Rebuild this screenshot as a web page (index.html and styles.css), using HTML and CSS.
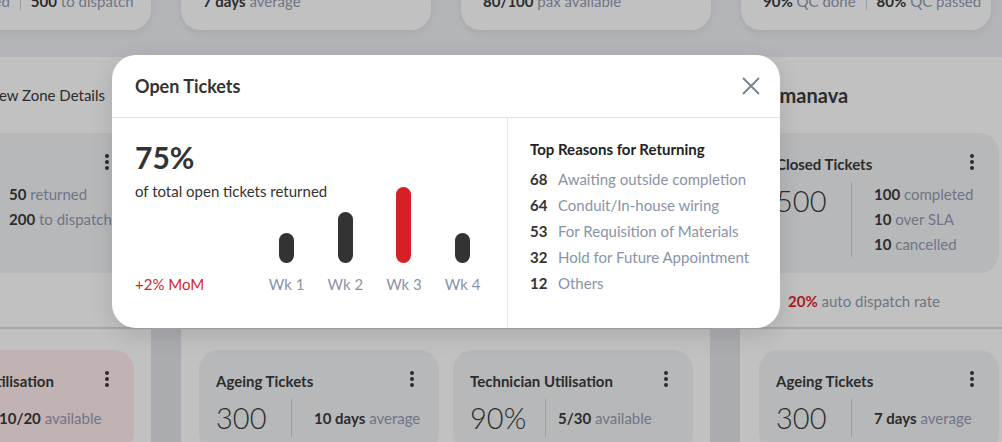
FILE: index.html
```html
<!DOCTYPE html>
<html lang="en">
<head>
<meta charset="utf-8">
<title>Open Tickets</title>
<link rel="stylesheet" href="styles.css">
</head>
<body>
<div class="top-row">
  <div class="top-card"><div class="top-stat"><span><b>120</b> returned</span><i class="vsep"></i><span><b>500</b> to dispatch</span></div></div>
  <div class="top-card"><div class="top-stat"><span><b>7 days</b> average</span></div></div>
  <div class="top-card"><div class="top-stat"><span><b>80/100</b> pax available</span></div></div>
  <div class="top-card"><div class="top-stat"><span><b>90%</b> QC done</span><i class="vsep"></i><span><b>80%</b> QC passed</span></div></div>
</div>

<div class="columns">
  <section class="col col--single">
    <div class="col-head">
      <span class="zone-name">Kalyan</span>
      <span class="zone-link">View Zone Details
        <svg width="16" height="16" viewBox="0 0 16 16"><path d="M6 3l5 5-5 5" fill="none" stroke="#2c2c2c" stroke-width="1.8" stroke-linecap="round" stroke-linejoin="round"/></svg>
      </span>
    </div>
    <div class="col-body">
      <div class="card card--tall">
        <div class="card-head"><span class="card-title">Open Tickets</span><span class="kebab"><i></i><i></i><i></i></span></div>
        <div class="stat"><span class="stat-num">250</span><div class="stat-list"><span><b>50</b> returned</span><span><b>200</b> to dispatch</span></div></div>
      </div>
      <div class="auto-row"></div>
    </div>
    <div class="col-rule"></div>
    <div class="col-lower">
      <div class="card card--alert">
        <div class="card-head"><span class="card-title">Technician Utilisation</span><span class="kebab"><i></i><i></i><i></i></span></div>
        <div class="stat"><span class="stat-num">50%</span><div class="stat-list stat-list--tight"><span><b>10/20</b> available</span></div></div>
      </div>
    </div>
  </section>

  <section class="col col--double">
    <div class="col-head"></div>
    <div class="col-body">
      <div class="card-grid">
        <div class="card card--tall"></div>
        <div class="card card--tall"></div>
      </div>
      <div class="auto-row"></div>
    </div>
    <div class="col-rule"></div>
    <div class="col-lower">
      <div class="card-grid">
        <div class="card">
          <div class="card-head"><span class="card-title">Ageing Tickets</span><span class="kebab"><i></i><i></i><i></i></span></div>
          <div class="stat"><span class="stat-num">300</span><div class="stat-list"><span><b>10 days</b> average</span></div></div>
        </div>
        <div class="card">
          <div class="card-head"><span class="card-title">Technician Utilisation</span><span class="kebab"><i></i><i></i><i></i></span></div>
          <div class="stat"><span class="stat-num">90%</span><div class="stat-list stat-list--tight"><span><b>5/30</b> available</span></div></div>
        </div>
      </div>
    </div>
  </section>

  <section class="col col--single">
    <div class="col-head">
      <span class="zone-name">Lamanava</span>
    </div>
    <div class="col-body">
      <div class="card card--tall">
        <div class="card-head"><span class="card-title">Closed Tickets</span><span class="kebab"><i></i><i></i><i></i></span></div>
        <div class="stat"><span class="stat-num">500</span><div class="stat-list"><span><b>100</b> completed</span><span><b>10</b> over SLA</span><span><b>10</b> cancelled</span></div></div>
      </div>
      <div class="auto-row">
        <svg width="20" height="20" viewBox="0 0 20 20"><path d="M11 2L4 11h5l-1 7 7-9h-5z" fill="none" stroke="#6e7587" stroke-width="1.5" stroke-linejoin="round"/></svg>
        <span><b class="hot">20%</b> auto dispatch rate</span>
      </div>
    </div>
    <div class="col-rule"></div>
    <div class="col-lower">
      <div class="card">
        <div class="card-head"><span class="card-title">Ageing Tickets</span><span class="kebab"><i></i><i></i><i></i></span></div>
        <div class="stat"><span class="stat-num">300</span><div class="stat-list"><span><b>7 days</b> average</span></div></div>
      </div>
    </div>
  </section>
</div>

<div class="modal" role="dialog" aria-label="Open Tickets">
  <div class="modal-head">
    <h2 class="modal-title">Open Tickets</h2>
    <button class="close" aria-label="Close">
      <svg width="18" height="18" viewBox="0 0 18 18"><path d="M1 1L17 17M17 1L1 17" stroke="#7a8499" stroke-width="2" fill="none"/></svg>
    </button>
  </div>
  <div class="modal-body">
    <div class="panel-left">
      <div class="summary">
        <div class="big">75%</div>
        <div class="sub">of total open tickets returned</div>
        <div class="mom">+2% MoM</div>
      </div>
      <div class="chart">
        <div class="chart-col"><div class="bar" style="height:30px"></div><span class="wk">Wk 1</span></div>
        <div class="chart-col"><div class="bar" style="height:51px"></div><span class="wk">Wk 2</span></div>
        <div class="chart-col"><div class="bar bar--hot" style="height:76px"></div><span class="wk">Wk 3</span></div>
        <div class="chart-col"><div class="bar" style="height:30px"></div><span class="wk">Wk 4</span></div>
      </div>
    </div>
    <div class="panel-right">
      <div class="reasons-title">Top Reasons for Returning</div>
      <ul class="reasons">
        <li><b>68</b><span>Awaiting outside completion</span></li>
        <li><b>64</b><span>Conduit/In-house wiring</span></li>
        <li><b>53</b><span>For Requisition of Materials</span></li>
        <li><b>32</b><span>Hold for Future Appointment</span></li>
        <li><b>12</b><span>Others</span></li>
      </ul>
    </div>
  </div>
</div>
</body>
</html>
```
FILE: styles.css
```css
* { box-sizing: border-box; margin: 0; padding: 0; }

body {
  width: 1002px;
  height: 442px;
  overflow: hidden;
  position: relative;
  background: #b4b5b8;
  font-family: Lato, "Open Sans", "Liberation Sans", sans-serif;
  font-size: 15px;
  color: #2c2c2c;
}

b { font-weight: 700; }

/* top summary row */
.top-row {
  display: flex;
  gap: 30px;
  margin-left: -99px;
  margin-top: -60px;
  height: 90px;
}
.top-card {
  flex: none;
  width: 250px;
  height: 90px;
  background: #c1c1c1;
  border-radius: 20px;
  box-shadow: 0 3px 8px rgba(0, 0, 0, 0.07);
  display: flex;
  align-items: flex-end;
  padding: 0 22px 16px;
}
.top-stat {
  display: flex;
  align-items: center;
  gap: 10px;
  line-height: 25px;
  white-space: nowrap;
  color: #6e7587;
}
.top-stat b { color: #2c2c2c; }
.vsep {
  display: block;
  width: 1px;
  height: 16px;
  background: #9a9eaa;
}

/* columns */
.columns {
  display: flex;
  gap: 30px;
  margin-left: -125px;
  margin-top: 27px;
  width: max-content;
  height: 385px;
  background: #abacb0;
}
.col { flex: none; background: #c1c1c1; }
.col--single { width: 276px; }
.col--double { width: 529px; }

.col-head {
  height: 76px;
  padding: 0 24px 0 19px;
  display: flex;
  align-items: center;
  justify-content: space-between;
  white-space: nowrap;
}
.zone-name { font-size: 20px; font-weight: 700; }
.zone-link { display: flex; align-items: center; gap: 6px; }

.col-body { padding: 0 18px 0 19px; }
.col--double .col-body,
.col--double .col-lower { padding-left: 18px; padding-right: 17px; }

.card-grid {
  display: grid;
  grid-template-columns: repeat(2, 240px);
  gap: 14px;
}
.card {
  width: 240px;
  background: #b7b8ba;
  border-radius: 20px;
  padding: 20px 25px 16px 17px;
}
.card--tall { min-height: 140px; }
.card--alert { background: #c1b3b3; }

.card-head {
  height: 22px;
  display: flex;
  align-items: center;
  justify-content: space-between;
}
.card-title { font-weight: 700; white-space: nowrap; }
.kebab {
  display: flex;
  flex-direction: column;
  gap: 2px;
  margin-top: -5px;
}
.kebab i {
  display: block;
  width: 4px;
  height: 4px;
  border-radius: 50%;
  background: #2c2c2c;
}

.stat {
  display: flex;
  margin-top: 7px;
  min-height: 38px;
}
.stat-num {
  flex: none;
  width: 75px;
  font-size: 29px;
  font-weight: 300;
  line-height: 38px;
  align-self: flex-start;
}
.stat-list {
  border-left: 1px solid #9a9eaa;
  padding-left: 22px;
  display: flex;
  flex-direction: column;
  justify-content: center;
  line-height: 25px;
  white-space: nowrap;
  color: #6e7587;
}
.stat-list b { color: #2c2c2c; }
.stat-list--tight { padding-left: 12px; }

.auto-row {
  margin-top: 16px;
  height: 25px;
  display: flex;
  align-items: center;
  gap: 9px;
  line-height: 25px;
  color: #6e7587;
  white-space: nowrap;
}
.hot { color: #ad1a1f; }

.col-rule {
  margin-top: 13px;
  border-top: 2px solid #a4a6ac;
}
.col-lower { padding: 21px 18px 0 19px; }

/* modal */
.modal {
  position: absolute;
  left: 112px;
  top: 55px;
  width: 668px;
  height: 273px;
  background: #fff;
  border-radius: 24px;
  box-shadow: 0 6px 24px rgba(0, 0, 0, 0.12);
  display: flex;
  flex-direction: column;
  overflow: hidden;
  color: #333;
}
.modal-head {
  flex: none;
  height: 63px;
  border-bottom: 1px solid #dfe0e8;
  display: flex;
  align-items: center;
  justify-content: space-between;
  padding: 0 20px 0 23px;
}
.modal-title { font-size: 18px; font-weight: 700; color: #333; }
.close {
  border: 0;
  background: none;
  display: flex;
  cursor: pointer;
}

.modal-body { flex: 1; display: flex; }
.panel-left {
  flex: none;
  width: 396px;
  border-right: 1px solid #e3e4ea;
  display: flex;
  padding: 19px 15px 33px 23px;
}
.summary { flex: 1; min-width: 0; display: flex; flex-direction: column; }
.big { font-size: 30px; font-weight: 700; line-height: 40px; }
.sub { margin-top: 3px; line-height: 22px; white-space: nowrap; }
.mom { margin-top: auto; line-height: 22px; color: #d71f26; }

.chart {
  flex: none;
  align-self: flex-end;
  display: grid;
  grid-template-columns: repeat(4, 58.7px);
  align-items: end;
}
.chart-col {
  display: flex;
  flex-direction: column;
  align-items: center;
}
.bar { width: 15px; border-radius: 8px; background: #333; }
.bar--hot { background: #d71f26; }
.wk { margin-top: 10px; line-height: 22px; color: #8a93a8; }

.panel-right { flex: 1; padding: 20px 20px 0 22px; }
.reasons-title { font-weight: 700; line-height: 22px; color: #222; }
.reasons { list-style: none; margin-top: 6px; }
.reasons li { display: flex; line-height: 26px; white-space: nowrap; }
.reasons b { width: 28px; flex: none; color: #333; font-weight: 700; }
.reasons span { color: #8a93a8; }
```
